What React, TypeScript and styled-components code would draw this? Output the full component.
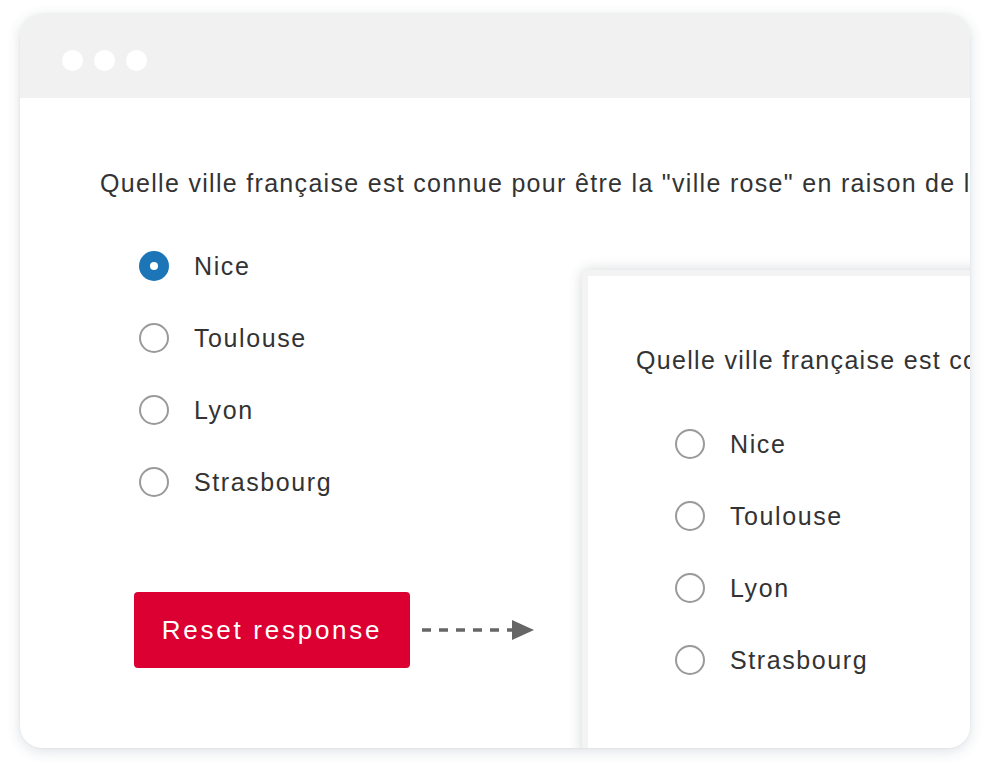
import React from "react";
import styled, { createGlobalStyle } from "styled-components";

const Global = createGlobalStyle`
  html, body { margin: 0; padding: 0; background: #ffffff; }
  body { font-family: "Liberation Sans", Arial, Helvetica, sans-serif; }
  * { box-sizing: border-box; }
`;

const Stage = styled.div`
  width: 990px;
  height: 772px;
  padding: 14px 20px 24px 20px;
`;

const Window = styled.div`
  width: 950px;
  height: 734px;
  border-radius: 22px;
  background: #ffffff;
  overflow: hidden;
  display: flex;
  flex-direction: column;
  box-shadow: 0 3px 14px rgba(40, 60, 80, 0.16), 0 0 3px rgba(40, 60, 80, 0.06);
`;

const TitleBar = styled.div`
  height: 84px;
  flex: 0 0 84px;
  background: #f1f1f1;
  display: flex;
  align-items: flex-start;
  gap: 11px;
  padding: 36px 0 0 42px;
`;

const Dot = styled.span`
  width: 21px;
  height: 21px;
  border-radius: 50%;
  background: #ffffff;
`;

const Body = styled.div`
  flex: 1;
  padding: 70px 0 0 80px;
  display: flex;
  flex-direction: column;
  min-height: 0;
`;

const Question = styled.div`
  font-size: 25px;
  line-height: 30px;
  color: #333333;
  letter-spacing: 1.31px;
  white-space: nowrap;
`;

const Split = styled.div`
  display: flex;
  align-items: flex-start;
  margin-top: 32px;
`;

const LeftCol = styled.div`
  width: 482px;
  flex: 0 0 482px;
  display: flex;
  flex-direction: column;
`;

const Options = styled.div<{ $top: number }>`
  display: flex;
  flex-direction: column;
  padding-left: 39px;
  margin-top: ${(p) => p.$top}px;
`;

const OptionRow = styled.label`
  height: 72px;
  display: flex;
  align-items: center;
  gap: 25px;
`;

const Radio = styled.span<{ $checked?: boolean }>`
  width: 30px;
  height: 30px;
  flex: 0 0 30px;
  border-radius: 50%;
  display: flex;
  align-items: center;
  justify-content: center;
  border: ${(p) => (p.$checked ? "none" : "2px solid #9a9a9a")};
  background: ${(p) => (p.$checked ? "#1b75b7" : "#ffffff")};
  &::after {
    content: "";
    display: ${(p) => (p.$checked ? "block" : "none")};
    width: 8px;
    height: 8px;
    border-radius: 50%;
    background: #ffffff;
  }
`;

const OptionLabel = styled.span`
  font-size: 25px;
  line-height: 30px;
  color: #333333;
  letter-spacing: 1.6px;
`;

const ActionRow = styled.div`
  display: flex;
  align-items: center;
  margin-top: 74px;
  padding-left: 34px;
  gap: 12px;
`;

const ResetButton = styled.button`
  width: 276px;
  height: 76px;
  border: none;
  border-radius: 4px;
  background: #dc0032;
  color: #ffffff;
  font-family: "Liberation Sans", Arial, Helvetica, sans-serif;
  font-size: 26px;
  letter-spacing: 2.75px;
  padding: 0;
  cursor: pointer;
`;

const Card = styled.div`
  margin-top: 40px;
  width: 520px;
  height: 520px;
  flex: 0 0 520px;
  border-radius: 7px;
  background: #f3f3f3;
  padding: 6px 0 0 6px;
  box-shadow: 0 0 14px rgba(40, 50, 60, 0.2);
`;

const CardInner = styled.div`
  height: 100%;
  background: #ffffff;
  padding: 69px 0 0 48px;
  display: flex;
  flex-direction: column;
`;

const options = ["Nice", "Toulouse", "Lyon", "Strasbourg"];

function OptionList({ selected, top }: { selected: number; top: number }) {
  return (
    <Options $top={top}>
      {options.map((o, i) => (
        <OptionRow key={o}>
          <Radio $checked={i === selected} />
          <OptionLabel>{o}</OptionLabel>
        </OptionRow>
      ))}
    </Options>
  );
}

const questionText =
  'Quelle ville française est connue pour être la "ville rose" en raison de la couleur de ses briques ?';

export default function App() {
  return (
    <>
      <Global />
      <Stage>
        <Window>
          <TitleBar>
            <Dot />
            <Dot />
            <Dot />
          </TitleBar>
          <Body>
            <Question>{questionText}</Question>
            <Split>
              <LeftCol>
                <OptionList selected={0} top={0} />
                <ActionRow>
                  <ResetButton>Reset response</ResetButton>
                  <svg width="114" height="24" viewBox="0 0 114 24">
                    <line
                      x1="0"
                      y1="12"
                      x2="90"
                      y2="12"
                      stroke="#666666"
                      strokeWidth="3.5"
                      strokeDasharray="9 8"
                    />
                    <polygon points="90,2 112,12 90,22" fill="#666666" />
                  </svg>
                </ActionRow>
              </LeftCol>
              <Card>
                <CardInner>
                  <Question>{questionText}</Question>
                  <OptionList selected={-1} top={33} />
                </CardInner>
              </Card>
            </Split>
          </Body>
        </Window>
      </Stage>
    </>
  );
}
